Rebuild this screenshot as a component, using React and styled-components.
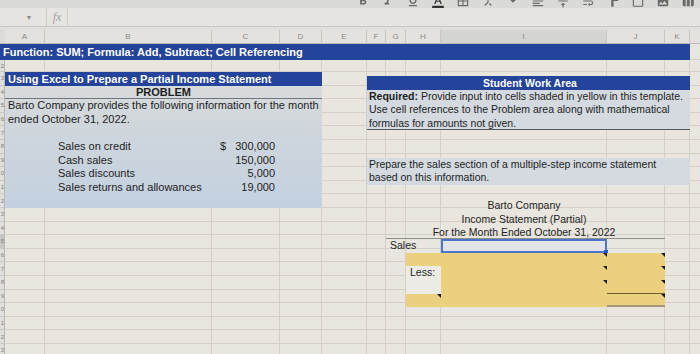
import React from 'react';
import styled, { createGlobalStyle, css } from 'styled-components';
import {
  MdFormatBold,
  MdFormatItalic,
  MdFormatUnderlined,
  MdFormatColorText,
  MdBorderAll,
  MdMergeType,
  MdArrowDropDown,
  MdFormatAlignLeft,
  MdVerticalAlignCenter,
  MdWrapText,
  MdFormatPaint,
  MdContentPaste,
  MdImage,
  MdTableChart,
} from 'react-icons/md';

const COLS = [
  ['A', 40],
  ['B', 167],
  ['C', 68],
  ['D', 42],
  ['E', 45],
  ['F', 19],
  ['G', 20],
  ['H', 35],
  ['I', 166],
  ['J', 58],
  ['K', 25],
  ['', 40],
];
const ROWS = Array.from({ length: 23 }, (_, i) => i + 1);
const TOOL_ICONS = [
  MdFormatBold,
  MdFormatItalic,
  MdFormatUnderlined,
  MdFormatColorText,
  MdBorderAll,
  MdMergeType,
  MdArrowDropDown,
  MdFormatAlignLeft,
  MdVerticalAlignCenter,
  MdWrapText,
  MdFormatPaint,
  MdContentPaste,
  MdImage,
  MdTableChart,
];
const SALES_DATA = [
  { label: 'Sales on credit', value: '300,000', dollar: true },
  { label: 'Cash sales', value: '150,000' },
  { label: 'Sales discounts', value: '5,000' },
  { label: 'Sales returns and allowances', value: '19,000' },
];

const GlobalStyle = createGlobalStyle`
  *, *::before, *::after { box-sizing: border-box; }
  body {
    margin: 0;
    background: #e6e4df;
    font-family: "Liberation Sans", Arial, sans-serif;
    color: #1e1e1e;
    overflow: hidden;
  }
`;

// right half of the photo sits a few px lower (camera angle)
const shifted = css`
  ${(p) => p.$shift && 'margin: 4px 0 -4px;'}
`;

const marked = css`
  &::after {
    content: '';
    position: absolute;
    top: 0;
    right: 0;
    border-top: 4px solid #1b1b1b;
    border-left: 4px solid transparent;
  }
`;

const Screen = styled.div`
  width: 700px;
  height: 354px;
  overflow: hidden;
  display: flex;
  flex-direction: column;
`;

const Toolbar = styled.div`
  height: 8px;
  flex-shrink: 0;
  display: flex;
  align-items: flex-end;
  gap: 11px;
  padding-left: 356px;
  overflow: hidden;
  background: #dadad8;
  color: #6a6a6a;

  svg {
    flex-shrink: 0;
  }
`;

const FormulaBar = styled.div`
  height: 19px;
  flex-shrink: 0;
  display: flex;
  align-items: stretch;
  background: #e5e4e1;
  border-bottom: 1px solid #c9c8c4;
`;

const NameBox = styled.div`
  width: 47px;
  display: flex;
  align-items: center;
  justify-content: flex-end;
  padding-right: 15px;
  border-right: 1px solid #d0cec9;
  color: #8a8a8a;
  font-size: 8px;
`;

const Fx = styled.div`
  width: 21px;
  display: flex;
  align-items: center;
  justify-content: center;
  border-right: 1px solid #d0cec9;
  color: #a3a3a3;
  font-family: "Liberation Serif", serif;
  font-style: italic;
  font-size: 12px;
`;

const Gap = styled.div`
  height: 3px;
  flex-shrink: 0;
  background: #dfdedb;
`;

const Sheet = styled.div`
  display: grid;
  grid-template-columns: 5px ${COLS.map(([, w]) => `${w}px`).join(' ')};
  grid-template-rows: 14px 16px 12px repeat(21, 13.6px);
  background: #e9e6df;
`;

const placed = css`
  grid-column: ${(p) => p.$col};
  grid-row: ${(p) => p.$row};
`;

const Corner = styled.div`
  grid-column: 1;
  grid-row: 1;
  background: #dcdbd7;
  border-bottom: 1px solid #bcbab5;
`;

const ColHead = styled.div`
  ${placed};
  display: flex;
  align-items: center;
  justify-content: center;
  font-size: 8px;
  color: #8b8b89;
  background: ${(p) => (p.$selected ? '#d4d4d2' : '#e3e2de')};
  border-right: 1px solid #c9c7c2;
  border-bottom: 1px solid #bcbab5;
`;

const RowHead = styled.div`
  ${placed};
  display: flex;
  align-items: center;
  justify-content: flex-end;
  overflow: hidden;
  white-space: nowrap;
  font-size: 6px;
  color: #7d7d7b;
  background: ${(p) => (p.$selected ? '#c7c6c2' : '#e0dfdb')};
  border-right: 1px solid #b9b7b2;
  border-bottom: 1px solid #cac8c3;
`;

const Cell = styled.div`
  ${placed};
  border-right: 1px solid #d4d0c8;
  border-bottom: 1px solid #d4d0c8;
`;

const Bar = styled.div`
  ${placed};
  ${shifted};
  display: flex;
  align-items: center;
  justify-content: ${(p) => (p.$center ? 'center' : 'flex-start')};
  padding-left: 3px;
  white-space: nowrap;
  background: #24449b;
  color: #fff;
  font-weight: 700;
  font-size: ${(p) => p.$size || 11}px;
`;

const ProblemPanel = styled.div`
  ${placed};
  font-size: 11px;
  line-height: 13.6px;
  background: linear-gradient(180deg, #d8dbdc 0%, #cfd6dc 35%, #c3d1e0 100%);
`;

const ProblemHeading = styled.div`
  height: 13.6px;
  text-align: center;
  font-weight: 700;
  border-bottom: 1px solid #72767a;
`;

const Para = styled.p`
  margin: 0 0 13.6px;
  padding-left: 3px;
`;

const DataRow = styled.div`
  display: grid;
  grid-template-columns: 40px 167px 68px;
`;

const DataLabel = styled.span`
  grid-column: 2;
  padding-left: 13px;
`;

const Amount = styled.span`
  display: flex;
  justify-content: space-between;
  padding: 0 5px 0 8px;
`;

const WorkPanel = styled.div`
  ${placed};
  ${shifted};
  padding-left: 2px;
  font-size: 10.5px;
  line-height: 13.6px;
  white-space: nowrap;
  background: #d4dae0;
  border-bottom: ${(p) => (p.$ruled ? '1px solid #55585c' : 'none')};
`;

const CenterText = styled.div`
  ${placed};
  ${shifted};
  display: flex;
  align-items: center;
  justify-content: center;
  white-space: nowrap;
  font-size: 10.5px;
`;

const Rule = styled.div`
  ${placed};
  ${shifted};
  border-bottom: 1px solid #8e8e8c;
`;

const LabelCell = styled.div`
  ${placed};
  ${shifted};
  display: flex;
  align-items: ${(p) => (p.$top ? 'flex-start' : 'center')};
  padding-left: 4px;
  white-space: nowrap;
  font-size: 10.5px;
  line-height: 13.6px;
  background: ${(p) => p.$bg || 'transparent'};
`;

const SelectedCell = styled.div`
  ${placed};
  ${shifted};
  position: relative;
  background: #e2e4e8;
  border: 2px solid #4c74c8;

  &::after {
    content: '';
    position: absolute;
    right: -3px;
    bottom: -3px;
    width: 4px;
    height: 4px;
    background: #2f5fc4;
  }
`;

const YellowCell = styled.div`
  ${placed};
  ${shifted};
  position: relative;
  background: #ebd07e;
  border-bottom: ${(p) => p.$rule || 'none'};
  ${(p) => p.$mark && marked};
`;

const col = (letter) => COLS.findIndex(([k]) => k === letter) + 2;
const row = (n) => n + 1;

export default function App() {
  return (
    <>
      <GlobalStyle />
      <Screen>
        <Toolbar>
          {TOOL_ICONS.map((Icon, i) => (
            <Icon key={i} size={14} color={i === 3 ? '#333' : undefined} />
          ))}
        </Toolbar>
        <FormulaBar>
          <NameBox>▾</NameBox>
          <Fx>fx</Fx>
        </FormulaBar>
        <Gap />

        <Sheet>
          <Corner />
          {COLS.map(([key], i) => (
            <ColHead key={i} $col={i + 2} $row={1} $selected={key === 'I'}>
              {key}
            </ColHead>
          ))}
          {ROWS.map((r) => (
            <React.Fragment key={r}>
              {/* only the last digit of the row number shows in the photo */}
              <RowHead $col={1} $row={row(r)} $selected={r === 15}>
                {r % 10}
              </RowHead>
              {COLS.map((_, i) => (
                <Cell key={i} $col={i + 2} $row={row(r)} />
              ))}
            </React.Fragment>
          ))}

          <Bar $col="1 / 13" $row={row(1)}>
            Function: SUM; Formula: Add, Subtract; Cell Referencing
          </Bar>

          {/* problem side */}
          <Bar $col="2 / 6" $row={row(3)}>
            Using Excel to Prepare a Partial Income Statement
          </Bar>
          <ProblemPanel $col="2 / 6" $row={`${row(4)} / ${row(13)}`}>
            <ProblemHeading>PROBLEM</ProblemHeading>
            <Para>
              Barto Company provides the following information for the month
              <br />
              ended October 31, 2022.
            </Para>
            {SALES_DATA.map((d) => (
              <DataRow key={d.label}>
                <DataLabel>{d.label}</DataLabel>
                <Amount>
                  <span>{d.dollar ? '$' : ''}</span>
                  <span>{d.value}</span>
                </Amount>
              </DataRow>
            ))}
          </ProblemPanel>

          {/* student work area */}
          <Bar $col="7 / 13" $row={row(3)} $center $size={10.5} $shift>
            Student Work Area
          </Bar>
          <WorkPanel $col="7 / 13" $row={`${row(4)} / ${row(7)}`} $ruled $shift>
            <b>Required:</b> Provide input into cells shaded in yellow in this template.
            <br />
            Use cell references to the Problem area along with mathematical
            <br />
            formulas for amounts not given.
          </WorkPanel>
          <WorkPanel $col="7 / 13" $row={`${row(9)} / ${row(11)}`} $shift>
            Prepare the sales section of a multiple-step income statement
            <br />
            based on this information.
          </WorkPanel>

          <CenterText $col={col('I')} $row={row(12)} $shift>
            Barto Company
          </CenterText>
          <CenterText $col={col('I')} $row={row(13)} $shift>
            Income Statement (Partial)
          </CenterText>
          <Rule $col={`${col('G')} / ${col('K')}`} $row={row(14)} $shift />
          <CenterText $col={col('I')} $row={row(14)} $shift>
            For the Month Ended October 31, 2022
          </CenterText>

          <LabelCell $col={col('G')} $row={row(15)} $shift>
            Sales
          </LabelCell>
          <SelectedCell $col={col('I')} $row={row(15)} $shift />

          <YellowCell $col={col('H')} $row={row(16)} $shift />
          <LabelCell $col={col('H')} $row={`${row(17)} / ${row(19)}`} $bg="#ecebe6" $top $shift>
            Less:
          </LabelCell>
          <YellowCell $col={col('H')} $row={row(19)} $mark $shift />

          {[16, 17, 18, 19].map((r) => (
            <YellowCell key={`i${r}`} $col={col('I')} $row={row(r)} $mark={r < 19} $shift />
          ))}
          {[16, 17, 18, 19].map((r) => (
            <YellowCell
              key={`j${r}`}
              $col={col('J')}
              $row={row(r)}
              $mark
              $shift
              $rule={r === 18 ? '1px solid #6d5c2c' : r === 19 ? '2px solid #a8997a' : undefined}
            />
          ))}
        </Sheet>
      </Screen>
    </>
  );
}
